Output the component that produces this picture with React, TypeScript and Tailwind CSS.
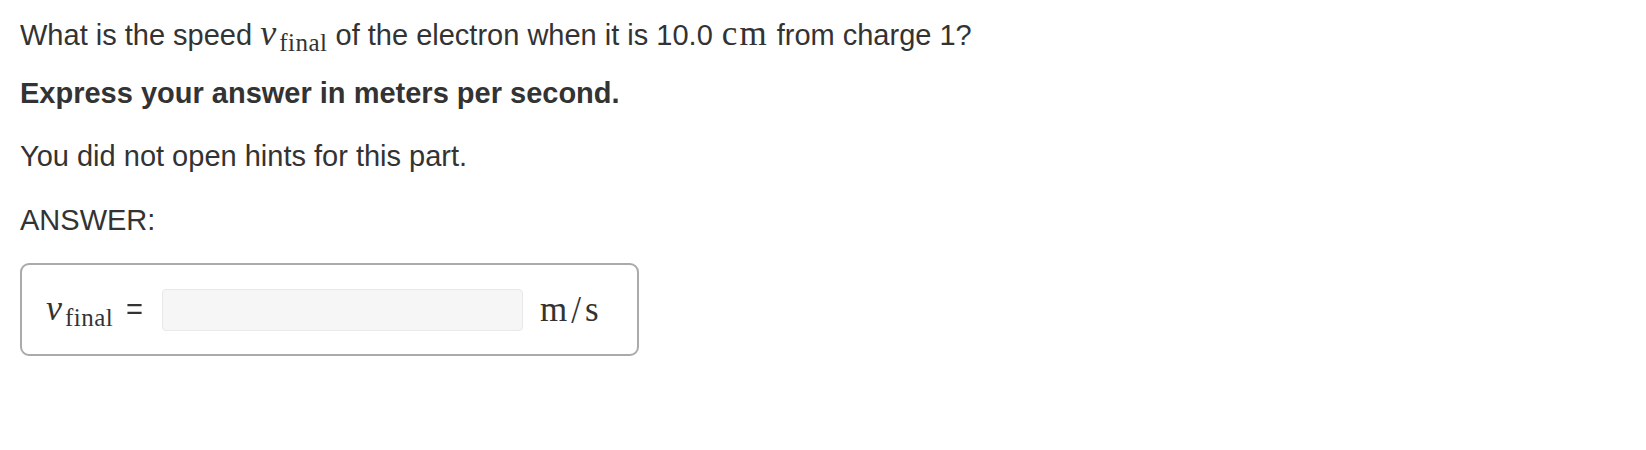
import React from 'react';

const sans = { fontFamily: '"Liberation Sans", Arial, sans-serif' };

// math variable v_final, KaTeX-ish sizing (1.21em of 29px)
function Var() {
  return (
    <span className="font-['Liberation_Serif',serif] whitespace-nowrap leading-[0]">
      <span className="italic text-[36px] pr-[3px]">v</span>
      <span className="text-[25px] relative top-[6px] tracking-[0.5px]">final</span>
    </span>
  );
}

export default function App() {
  return (
    <div className="bg-white text-[#333] px-5 pt-[18px] text-[29px] leading-[34px] w-[1646px] h-[450px]" style={sans}>
      <p className="h-[34px] mb-[24px] whitespace-nowrap">
        What is the speed <Var /> of the electron when it is 10.0{' '}
        <span className="font-['Liberation_Serif',serif] text-[35px] leading-[0] tracking-[2px] ml-[1px]">cm</span> from charge 1?
      </p>
      <p className="h-[34px] mb-[29px] font-bold">Express your answer in meters per second.</p>
      <p className="h-[34px] mb-[30px]">You did not open hints for this part.</p>
      <p className="h-[34px] mb-[26px]">ANSWER:</p>
      <div className="w-[619px] h-[93px] border-2 border-[#aaaaaa] rounded-[9px] flex items-center pl-[24px]">
        <div className="w-[80px] shrink-0">
          <Var />
        </div>
        <span className="text-[29px] leading-none">=</span>
        <div className="ml-[19px] w-[361px] h-[42px] shrink-0 bg-[#f6f6f6] border border-[#e9e9e9] rounded-[4px]" />
        <span className="ml-[17px] font-['Liberation_Serif',serif] text-[35px] leading-none whitespace-nowrap">
          m<span className="mx-[4px] inline-block scale-y-[1.15]">/</span>s
        </span>
      </div>
    </div>
  );
}
